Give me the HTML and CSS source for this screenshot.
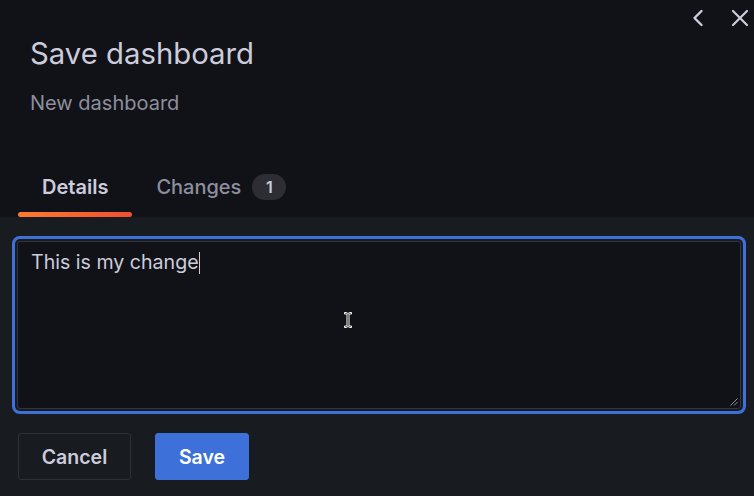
FILE: index.html
```html
<!DOCTYPE html>
<html lang="en">
<head>
<meta charset="utf-8">
<title>Save dashboard</title>
<link rel="stylesheet" href="styles.css">
</head>
<body>
<div class="drawer">
  <div class="actions">
    <button class="icon-btn" aria-label="Collapse">
      <svg width="12" height="18" viewBox="0 0 12 18"><path d="M9.5 2 L2.5 9 L9.5 16" fill="none" stroke="#ccccdc" stroke-width="2.4" stroke-linecap="round" stroke-linejoin="round"/></svg>
    </button>
    <button class="icon-btn" aria-label="Close">
      <svg width="18" height="18" viewBox="0 0 18 18"><path d="M2 2 L16 16 M16 2 L2 16" fill="none" stroke="#ccccdc" stroke-width="2.2" stroke-linecap="round"/></svg>
    </button>
  </div>
  <header class="header">
    <h1 class="title">Save dashboard</h1>
    <div class="subtitle">New dashboard</div>
  </header>
  <nav class="tabs">
    <div class="tab active">Details</div>
    <div class="tab">Changes <span class="badge">1</span></div>
  </nav>
  <main class="body">
    <div class="field">
      <div class="textarea" role="textbox">This is my change<span class="caret"></span>
        <svg class="resize" width="8" height="8" viewBox="0 0 8 8"><path d="M7.5 0.5 L0.5 7.5 M7.5 4 L4 7.5" stroke="#8e8e9e" stroke-width="1"/></svg>
        <svg class="pointer" width="10" height="18" viewBox="0 0 10 18"><path d="M1.5 1.5 H3.5 L5 2.6 L6.5 1.5 H8.5 V3 H6 V15 H8.5 V16.5 H6.5 L5 15.4 L3.5 16.5 H1.5 V15 H4 V3 H1.5 Z" fill="#000" stroke="#fff" stroke-width="1"/></svg>
      </div>
    </div>
    <div class="buttons">
      <button class="btn secondary">Cancel</button>
      <button class="btn primary">Save</button>
    </div>
  </main>
</div>
</body>
</html>
```
FILE: styles.css
```css
* { box-sizing: border-box; }
html, body { margin: 0; height: 100%; }
body {
  background: #111217;
  font-family: Inter, "Noto Sans", sans-serif;
  color: #ccccdc;
  overflow: hidden;
}
.drawer { position: relative; height: 496px; display: flex; flex-direction: column; }
.actions {
  position: absolute; top: 9px; right: 5px;
  display: flex; gap: 27px; align-items: center;
}
.icon-btn {
  background: none; border: 0; padding: 0; margin: 0;
  display: flex; align-items: center; cursor: pointer;
}
.header { padding: 34px 30px 0; }
.title {
  margin: 0; font-size: 29.3px; font-weight: 400; line-height: 40px;
  color: #ccccdc; letter-spacing: 0;
}
.subtitle {
  margin-top: 17px; font-size: 20px; line-height: 24px;
  color: #8e8e9e;
}
.tabs {
  display: flex; padding: 0 0 0 18px; margin-top: 46px;
  height: 56px; align-items: stretch;
}
.tab {
  position: relative; display: flex; align-items: center;
  padding: 0 24px 4px; font-size: 20px; color: #8e8e9e; font-weight: 500;
}
.tab.active { color: #ccccdc; font-weight: 600; }
.tab.active::after {
  content: ""; position: absolute; left: 0; right: 0; bottom: 0; height: 5px;
  border-radius: 3px;
  background: linear-gradient(90deg, #ff7a2f 0%, #f0502f 100%);
}
.badge {
  display: inline-flex; align-items: center; justify-content: center;
  width: 34px; height: 26px; border-radius: 13px; margin-left: 11px;
  background: #2c2e33; color: #ccccdc; font-size: 16px; font-weight: 600;
}
.body { flex: 1; background: #181b1f; padding: 24px 13px 0 17px; }
.textarea {
  position: relative; height: 168px; width: 724px;
  background: #111217; border: 1px solid #33353b; border-radius: 3px;
  box-shadow: 0 0 0 2px #181b1f, 0 0 0 5px #3d71d9;
  padding: 7px 13px; font-size: 19.6px; line-height: 26px; color: #ccccdc;
}
.caret {
  display: inline-block; width: 1px; height: 22px; background: #ccccdc;
  vertical-align: -5px;
}
.resize { position: absolute; right: 2px; bottom: 2px; }
.pointer { position: absolute; left: 325px; top: 69px; }
.buttons { display: flex; gap: 24px; margin-top: 24px; padding-left: 1px; }
.btn {
  height: 47px; border-radius: 3px; font-family: inherit;
  font-size: 19.5px; font-weight: 600; padding: 0; cursor: pointer;
}
.btn.secondary { background: transparent; border: 1px solid #2e3035; color: #ccccdc; width: 113px; }
.btn.primary { background: #3d71d9; border: 1px solid #3d71d9; color: #ffffff; width: 94px; }
```
